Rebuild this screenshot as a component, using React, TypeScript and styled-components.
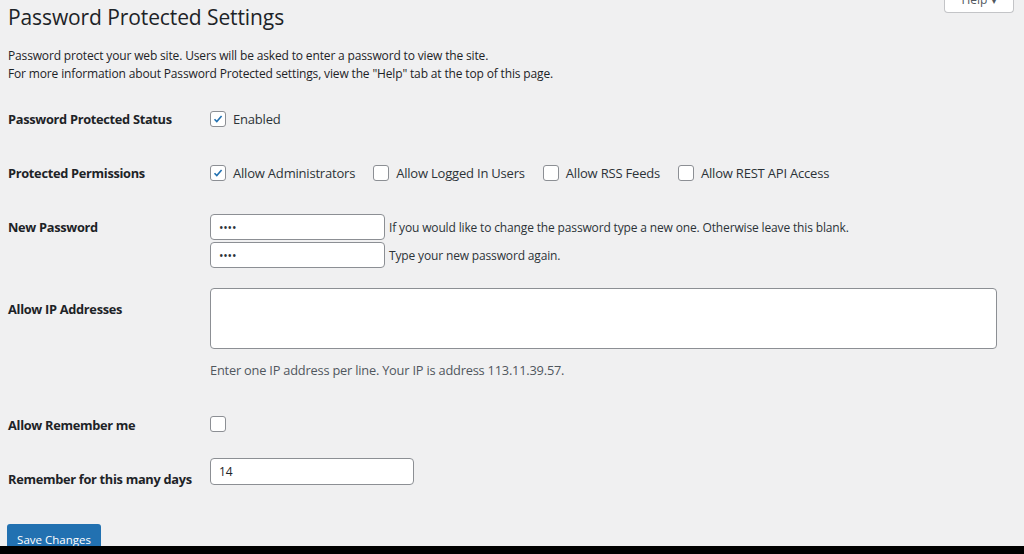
import React from "react";
import styled, { createGlobalStyle } from "styled-components";

const G = createGlobalStyle`
  html,body{margin:0;padding:0;background:#f0f0f1;overflow:hidden;}
  body{font-family:"Open Sans","Noto Sans",sans-serif;color:#1d2327;font-size:13px;}
`;
const Page = styled.div`position:relative;height:546px;padding:0 8px;overflow:hidden;`;
const Bottom = styled.div`height:8px;background:#000;`;
const Help = styled.div`position:absolute;right:10px;top:-6px;width:68px;height:18px;border:1px solid #c3c4c7;border-top:none;background:#fff;border-radius:0 0 4px 4px;font-size:12px;color:#50575e;text-align:center;line-height:12px;`;
const Title = styled.h1`margin:0;padding-top:4px;font-size:21px;font-weight:400;letter-spacing:-0.1px;line-height:26px;`;
const Intro = styled.p`margin:17px 0 0;font-size:12px;line-height:18px;letter-spacing:-0.15px;`;
const Row = styled.div<{ h: number }>`display:flex;align-items:flex-start;height:${p => p.h}px;`;
const Label = styled.div`width:202px;flex:none;font-weight:700;font-size:12.8px;letter-spacing:-0.3px;line-height:18px;`;
const Field = styled.div`display:flex;flex-direction:column;gap:2px;`;
const Inline = styled.div`display:flex;align-items:center;gap:6px;font-size:13px;letter-spacing:-0.2px;color:#2c3338;`;
const Opt = styled.label`display:flex;align-items:center;gap:7px;margin-right:12px;`;
const Box = styled.span<{ on?: boolean }>`width:14px;height:14px;border:1px solid #8c8f94;border-radius:3px;background:#fff;display:flex;align-items:center;justify-content:center;`;
const Input = styled.div<{ w: number }>`width:${p => p.w}px;height:26px;box-sizing:border-box;border:1px solid #8c8f94;border-radius:4px;background:#fff;padding:0 8px;display:flex;align-items:center;font-size:12px;`;
const Area = styled.div`width:787px;height:61px;box-sizing:border-box;border:1px solid #8c8f94;border-radius:4px;background:#fff;`;
const Desc = styled.div`font-size:12.8px;color:#50575e;margin-top:10px;letter-spacing:-0.2px;`;
const Small = styled.span`font-size:12px;letter-spacing:-0.15px;`;
const Btn = styled.div`width:94px;height:30px;background:#2271b1;border-radius:3px;color:#fff;font-size:11.5px;display:flex;align-items:center;justify-content:center;margin-left:-1px;`;

const Check = () => (
  <svg width="12" height="12" viewBox="0 0 12 12"><path d="M2.5 6.2l2.3 2.4L9.6 3" fill="none" stroke="#2271b1" strokeWidth="1.6" /></svg>
);

export default function App() {
  return (
    <>
      <G />
      <Page>
        <Help>Help ▾</Help>
        <Title>Password Protected Settings</Title>
        <Intro>Password protect your web site. Users will be asked to enter a password to view the site.<br />For more information about Password Protected settings, view the "Help" tab at the top of this page.</Intro>
        <div style={{ height: 27 }} />
        <Row h={54}><Label>Password Protected Status</Label><Inline><Opt><Box on><Check /></Box>Enabled</Opt></Inline></Row>
        <Row h={54}><Label>Protected Permissions</Label><Inline>
          <Opt><Box on><Check /></Box>Allow Administrators</Opt>
          <Opt><Box />Allow Logged In Users</Opt>
          <Opt><Box />Allow RSS Feeds</Opt>
          <Opt><Box />Allow REST API Access</Opt>
        </Inline></Row>
        <Row h={82}><Label>New Password</Label><Field style={{ marginTop: -4 }}>
          <Inline style={{ gap: 4 }}><Input w={175}>••••</Input><Small>If you would like to change the password type a new one. Otherwise leave this blank.</Small></Inline>
          <Inline style={{ gap: 4 }}><Input w={175}>••••</Input><Small>Type your new password again.</Small></Inline>
        </Field></Row>
        <Row h={116}><Label>Allow IP Addresses</Label><Field style={{ marginTop: -12 }}>
          <Area /><Desc>Enter one IP address per line. Your IP is address 113.11.39.57.</Desc>
        </Field></Row>
        <Row h={54}><Label>Allow Remember me</Label><Inline><Box /></Inline></Row>
        <Row h={54}><Label>Remember for this many days</Label><Field style={{ marginTop: -12 }}><Input w={204} style={{ height: 27 }}>14</Input></Field></Row>
        <Btn>Save Changes</Btn>
      </Page>
      <Bottom />
    </>
  );
}
